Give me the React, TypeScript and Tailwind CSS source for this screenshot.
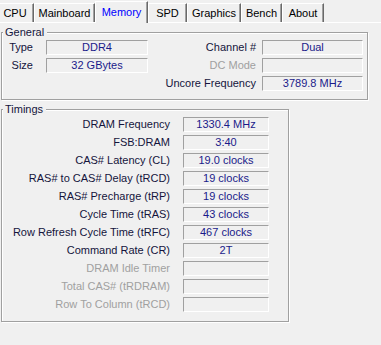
import React from "react";

const tabs = [
  { name: "CPU", w: "w-[38px] -ml-[4px]" },
  { name: "Mainboard", w: "w-[61px]" },
  { name: "Memory", w: "w-[53px]", active: true },
  { name: "SPD", w: "w-[39px]" },
  { name: "Graphics", w: "w-[54px]" },
  { name: "Bench", w: "w-[41px]" },
  { name: "About", w: "w-[42px]" },
];

const timings: { label: string; value: string; disabled?: boolean }[] = [
  { label: "DRAM Frequency", value: "1330.4 MHz" },
  { label: "FSB:DRAM", value: "3:40" },
  { label: "CAS# Latency (CL)", value: "19.0 clocks" },
  { label: "RAS# to CAS# Delay (tRCD)", value: "19 clocks" },
  { label: "RAS# Precharge (tRP)", value: "19 clocks" },
  { label: "Cycle Time (tRAS)", value: "43 clocks" },
  { label: "Row Refresh Cycle Time (tRFC)", value: "467 clocks" },
  { label: "Command Rate (CR)", value: "2T" },
  { label: "DRAM Idle Timer", value: "", disabled: true },
  { label: "Total CAS# (tRDRAM)", value: "", disabled: true },
  { label: "Row To Column (tRCD)", value: "", disabled: true },
];

function Field({ value, className }: { value?: string; className: string }) {
  return (
    <div
      className={`h-[15px] border-t border-l border-t-[#a0a0a0] border-l-[#a0a0a0] border-b border-r border-b-white border-r-white flex items-center justify-center text-[#1a1a8a] ${className}`}
    >
      {value}
    </div>
  );
}

function Group({ title, className, children }: { title: string; className: string; children: React.ReactNode }) {
  return (
    <div className={`relative border border-[#a0a0a0] shadow-[inset_1px_1px_0_#fff,1px_1px_0_#fff] ${className}`}>
      <span className="absolute -top-[7px] left-[1px] bg-[#f0f0f0] pl-[2px] pr-[3px] text-[#14143c]">{title}</span>
      {children}
    </div>
  );
}

export default function App() {
  return (
    <div
      className="w-[381px] h-[345px] bg-[#f0f0f0] overflow-hidden text-[11px] leading-[13px] text-[#14143c]"
      style={{ fontFamily: '"Liberation Sans", Arial, sans-serif' }}
    >
      <div className="flex h-[22px] items-start">
        {tabs.map((t) =>
          t.active ? (
            <div
              key={t.name}
              className={`${t.w} relative z-10 mt-[1px] h-[22px] bg-[#f0f0f0] border-l border-t border-l-white border-t-white border-r border-r-[#696969] shadow-[inset_-1px_0_0_#a0a0a0] flex justify-center pt-[4px] text-[#0000ff]`}
            >
              {t.name}
            </div>
          ) : (
            <div
              key={t.name}
              className={`${t.w} mt-[3px] h-[19px] bg-[#f0f0f0] border-l border-t border-l-white border-t-white border-r border-r-[#696969] shadow-[inset_-1px_0_0_#a0a0a0] flex justify-center pt-[3px] text-black`}
            >
              {t.name}
            </div>
          )
        )}
      </div>
      <div className="border-t border-white pt-[9px]">
        <Group title="General" className="ml-[1px] w-[367px] h-[68px] pt-[7px]">
          <div className="flex flex-col gap-[3px]">
            <div className="flex items-center h-[15px]">
              <span className="w-[31px] text-right">Type</span>
              <Field value="DDR4" className="ml-[13px] w-[102px]" />
              <span className="w-[108px] text-right">Channel #</span>
              <Field value="Dual" className="ml-[6px] w-[101px]" />
            </div>
            <div className="flex items-center h-[15px]">
              <span className="w-[31px] text-right">Size</span>
              <Field value="32 GBytes" className="ml-[13px] w-[102px]" />
              <span className="w-[108px] text-right text-[#a0a0a0]">DC Mode</span>
              <Field className="ml-[6px] w-[101px]" />
            </div>
            <div className="flex items-center h-[15px]">
              <span className="w-[254px] text-right whitespace-nowrap">Uncore Frequency</span>
              <Field value="3789.8 MHz" className="ml-[6px] w-[101px]" />
            </div>
          </div>
        </Group>
        <Group title="Timings" className="ml-[1px] mt-[9px] w-[288px] h-[213px] pt-[7px]">
          <div className="flex flex-col gap-[3px]">
            {timings.map((r) => (
              <div key={r.label} className="flex items-center h-[15px]">
                <span className={`w-[168px] text-right whitespace-nowrap ${r.disabled ? "text-[#a0a0a0]" : ""}`}>
                  {r.label}
                </span>
                <Field value={r.value} className="ml-[13px] w-[86px]" />
              </div>
            ))}
          </div>
        </Group>
      </div>
    </div>
  );
}
